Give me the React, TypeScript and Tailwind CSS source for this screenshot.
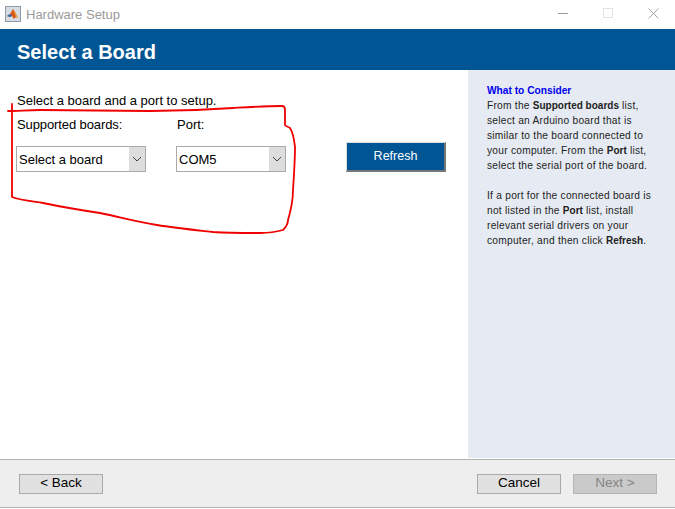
const Select = ({ label, width }: { label: string; width: string }) => (
  <div className={`${width} h-[26px] flex items-center border border-[#a9a9a9] bg-white`}>
    <span className="flex-1 pl-[2px] pt-[1px] text-[13px] text-black">{label}</span>
    <span className="w-[16px] h-full flex items-center justify-center bg-[#dddddd]">
      <svg width="10" height="6" viewBox="0 0 10 6" fill="none" stroke="#444444" strokeWidth="1">
        <path d="M1 1l4 4 4-4" />
      </svg>
    </span>
  </div>
);

const FooterButton = ({ label, disabled }: { label: string; disabled?: boolean }) => (
  <button
    className={
      disabled
        ? "w-[84px] h-[20px] pb-[1px] border border-[#b5b5b5] bg-[#cacaca] text-[13.5px] leading-none text-[#858585]"
        : "w-[84px] h-[20px] pb-[1px] border border-[#a9a9a9] bg-[#e1e1e1] text-[13.5px] leading-none text-black"
    }
  >
    {label}
  </button>
);

export default function App() {
  return (
    <div className="relative w-[675px] h-[509px] flex flex-col bg-white overflow-hidden font-['Liberation_Sans',Arial,sans-serif]">
      {/* title bar */}
      <div className="h-[29px] flex items-center pl-[5px] pr-[16px] shrink-0">
        <svg className="mb-[2px]" width="16" height="16" viewBox="0 0 16 16">
          <rect x="0.5" y="0.5" width="15" height="15" fill="#d5dce4" stroke="#8f9aa6" />
          <path d="M2 10l3-2 3-5 2 3 3 6-2-1-2 2-2-3-2 1z" fill="#d9591c" />
          <path d="M2 10l3-2 2 2-2 1z" fill="#2f6fb2" />
          <path d="M8 3l2 3 3 6-2-1z" fill="#f0a030" />
        </svg>
        <span className="ml-[5px] text-[13px] text-[#9a9a9a]">Hardware Setup</span>
        <div className="ml-auto mb-[3px] flex items-center gap-[35px]">
          <span className="w-[10px] h-px bg-[#9a9a9a]" />
          <span className="w-[10px] h-[10px] border border-[#e3e3e3]" />
          <svg width="11" height="11" viewBox="0 0 11 11" stroke="#9a9a9a" strokeWidth="0.9">
            <path d="M0.5 0.5l10 10M10.5 0.5l-10 10" />
          </svg>
        </div>
      </div>

      {/* header */}
      <div className="h-[41px] shrink-0 flex items-center pl-[17px] pt-[4px] bg-[#005595]">
        <h1 className="text-[20px] font-bold text-white">Select a Board</h1>
      </div>

      {/* body */}
      <div className="flex h-[388px] shrink-0">
        <div className="flex-1 pl-[17px] pt-[23px]">
          <p className="text-[13px] leading-[16px] text-black">Select a board and a port to setup.</p>
          <div className="flex mt-[8px]">
            <div className="w-[160px]">
              <p className="text-[13px] leading-[16px] tracking-[-0.1px] text-black">Supported boards:</p>
              <div className="mt-[13px] -ml-[1px]">
                <Select label="Select a board" width="w-[130px]" />
              </div>
            </div>
            <div>
              <p className="text-[13px] leading-[16px] text-black">Port:</p>
              <div className="mt-[13px] -ml-[1px]">
                <Select label="COM5" width="w-[110px]" />
              </div>
            </div>
            <button className="ml-[60px] mt-[25px] w-[100px] h-[30px] bg-[#005595] border border-[#dddddd] border-r-[#777777] border-b-[#777777] border-r-2 border-b-2 text-[12.5px] text-white">
              Refresh
            </button>
          </div>
        </div>
        <aside className="w-[207px] bg-[#e6ebf3] pl-[19px] pt-[13px] text-[10.2px] leading-[15px] tracking-[0.25px] text-[#222222]">
          <p className="font-bold tracking-normal text-[#0000ee]">What to Consider</p>
          <p>
            From the <b className="text-[10px] tracking-normal">Supported boards</b> list,
            <br />
            select an Arduino board that is
            <br />
            similar to the board connected to
            <br />
            your computer. From the <b className="text-[10px] tracking-normal">Port</b> list,
            <br />
            select the serial port of the board.
          </p>
          <p className="mt-[15px]">
            If a port for the connected board is
            <br />
            not listed in the <b className="text-[10px] tracking-normal">Port</b> list, install
            <br />
            relevant serial drivers on your
            <br />
            computer, and then click <b className="text-[10px] tracking-normal">Refresh</b>.
          </p>
        </aside>
      </div>

      {/* footer */}
      <div className="mt-px h-[49px] shrink-0 flex items-center pl-[19px] pr-[18px] bg-[#eeeeee] border-t border-b border-[#b4b4b4]">
        <FooterButton label="< Back" />
        <div className="ml-auto flex gap-[12px]">
          <FooterButton label="Cancel" />
          <FooterButton label="Next >" disabled />
        </div>
      </div>

      {/* hand drawn annotation */}
      <svg className="absolute left-0 top-0 pointer-events-none" width="675" height="509" fill="none" stroke="#f00000" strokeWidth="1.8" strokeLinecap="round" strokeLinejoin="round">
        <path d="M12 104L12 197C20 200 30 201 43 203C62 207 80 210 100 213C120 217 138 222 157 225C175 228 195 230 213 232C230 233 245 233 260 233C268 233 276 232 283 230C287 226 288 223 288 220C291 210 293 200 293 190C294 175 295 160 295 147C294 138 292 131 290 128C287 126 285 126 285 125L285 110C285 108 284 106 282 106C265 106 250 107 233 108C205 110 178 111 150 111C115 111 75 110 40 110C28 110 18 111 8 111" />
      </svg>
    </div>
  );
}
